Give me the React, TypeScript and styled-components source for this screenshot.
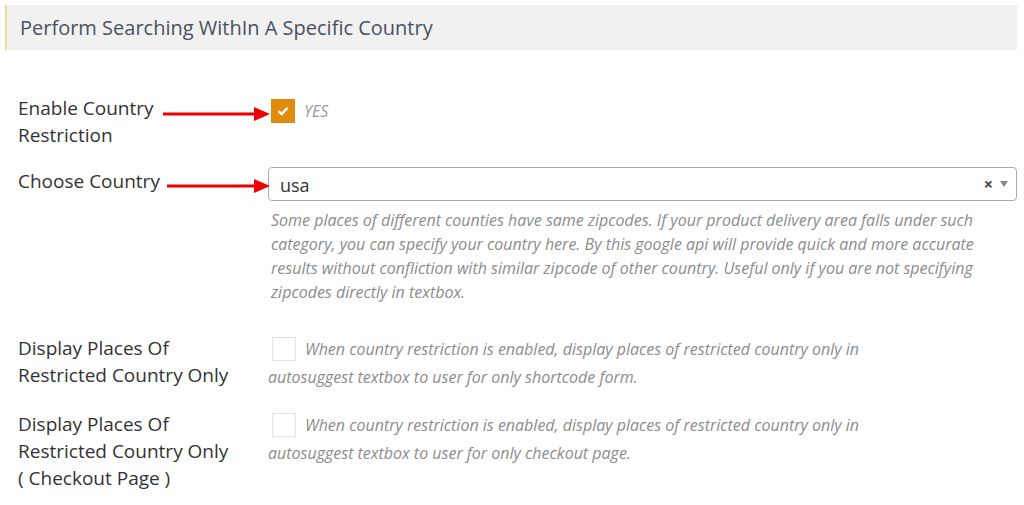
import React from 'react';
import styled, { createGlobalStyle } from 'styled-components';

const GlobalStyle = createGlobalStyle`
  html, body {
    margin: 0;
    padding: 0;
    background: #fff;
  }

  body {
    font-family: 'Open Sans', 'Liberation Sans', sans-serif;
    color: #333;
  }
`;

const Page = styled.div`
  width: 1024px;
  height: 505px;
  padding: 5px 7px 0 5px;
  box-sizing: border-box;
  overflow: hidden;
`;

const SectionHeader = styled.div`
  height: 45px;
  display: flex;
  align-items: center;
  background: #f1f1f1;
  border-left: 2px solid #f3dc8f;
  padding-left: 13px;
  font-size: 20px;
  color: #4a5260;
`;

const Row = styled.div<{ $gap: number }>`
  display: grid;
  grid-template-columns: 250px 1fr;
  padding-left: 13px;
  margin-top: ${(p) => p.$gap}px;
  position: relative;
`;

const Label = styled.div<{ $offset?: number }>`
  font-size: 19px;
  line-height: 27px;
  color: #333;
  margin-top: ${(p) => p.$offset ?? 0}px;
`;

const Field = styled.div`
  display: flex;
  flex-direction: column;
  min-width: 0;
`;

const CheckLine = styled.div`
  display: flex;
  align-items: center;
  margin-top: 4px;
  padding-left: 3px;
`;

const Box = styled.span<{ $checked?: boolean }>`
  display: inline-flex;
  align-items: center;
  justify-content: center;
  width: 24px;
  height: 24px;
  box-sizing: border-box;
  background: ${(p) => (p.$checked ? '#e18b0b' : '#fff')};
  border: 1px solid ${(p) => (p.$checked ? '#e18b0b' : '#e2e2e2')};
  vertical-align: middle;
  margin-right: 9px;
`;

const YesText = styled.span`
  font-style: italic;
  font-size: 16px;
  color: #9a9a9a;
`;

const Select = styled.div`
  height: 34px;
  box-sizing: border-box;
  border: 1px solid #aaa;
  border-radius: 4px;
  display: flex;
  align-items: center;
  padding: 2px 8px 0 11px;
  font-size: 18px;
  color: #333;
`;

const SelectValue = styled.span`
  flex: 1;
`;

const Clear = styled.span`
  font-size: 16px;
  font-weight: 700;
  color: #444;
  margin-right: 7px;
  margin-top: -2px;
`;

const Caret = styled.span`
  width: 0;
  height: 0;
  margin-top: -2px;
  border-left: 4.5px solid transparent;
  border-right: 4.5px solid transparent;
  border-top: 6px solid #888;
`;

const Help = styled.p<{ $width: number }>`
  margin: 7px 0 0;
  padding-left: 3px;
  max-width: ${(p) => p.$width}px;
  font-style: italic;
  font-size: 16px;
  line-height: 24px;
  color: #8c8c8c;
`;

const InlineHelp = styled.p`
  margin: 0;
  max-width: 620px;
  font-style: italic;
  font-size: 16px;
  line-height: 28px;
  color: #8c8c8c;

  ${Box} {
    margin-left: 4px;
    margin-right: 9px;
    position: relative;
    top: -2px;
  }
`;

const Arrow = styled.svg<{ $top: number; $left: number }>`
  position: absolute;
  top: ${(p) => p.$top}px;
  left: ${(p) => p.$left}px;
`;

const RedArrow = ({ top, left, width }: { top: number; left: number; width: number }) => (
  <Arrow $top={top} $left={left} width={width} height={14} viewBox={`0 0 ${width} 14`}>
    <rect x={0} y={5.5} width={width - 14} height={3} fill="#ee0000" />
    <polygon points={`${width - 16},0 ${width},7 ${width - 16},14`} fill="#ee0000" />
  </Arrow>
);

const Tick = () => (
  <svg width="12" height="10" viewBox="0 0 12 10">
    <path d="M1.5 5.2 L4.6 8 L10.5 1.8" stroke="#fff" strokeWidth="2.4" fill="none" />
  </svg>
);

const App = () => {
  return (
    <Page>
      <GlobalStyle />
      <SectionHeader>Perform Searching WithIn A Specific Country</SectionHeader>

      <Row $gap={45}>
        <Label>
          Enable Country
          <br />
          Restriction
        </Label>
        <Field>
          <CheckLine>
            <Box $checked>
              <Tick />
            </Box>
            <YesText>YES</YesText>
          </CheckLine>
        </Field>
        <RedArrow top={12} left={158} width={107} />
      </Row>

      <Row $gap={18}>
        <Label $offset={1}>Choose Country</Label>
        <Field>
          <Select>
            <SelectValue>usa</SelectValue>
            <Clear>×</Clear>
            <Caret />
          </Select>
          <Help $width={722}>
            Some places of different counties have same zipcodes. If your product delivery area falls under such
            category, you can specify your country here. By this google api will provide quick and more accurate
            results without confliction with similar zipcode of other country. Useful only if you are not
            specifying zipcodes directly in textbox.
          </Help>
        </Field>
        <RedArrow top={12} left={162} width={103} />
      </Row>

      <Row $gap={31}>
        <Label>
          Display Places Of
          <br />
          Restricted Country Only
        </Label>
        <Field>
          <InlineHelp>
            <Box />
            When country restriction is enabled, display places of restricted country only in autosuggest textbox
            to user for only shortcode form.
          </InlineHelp>
        </Field>
      </Row>

      <Row $gap={20}>
        <Label>
          Display Places Of
          <br />
          Restricted Country Only
          <br />( Checkout Page )
        </Label>
        <Field>
          <InlineHelp>
            <Box />
            When country restriction is enabled, display places of restricted country only in autosuggest textbox
            to user for only checkout page.
          </InlineHelp>
        </Field>
      </Row>
    </Page>
  );
};

export default App;
